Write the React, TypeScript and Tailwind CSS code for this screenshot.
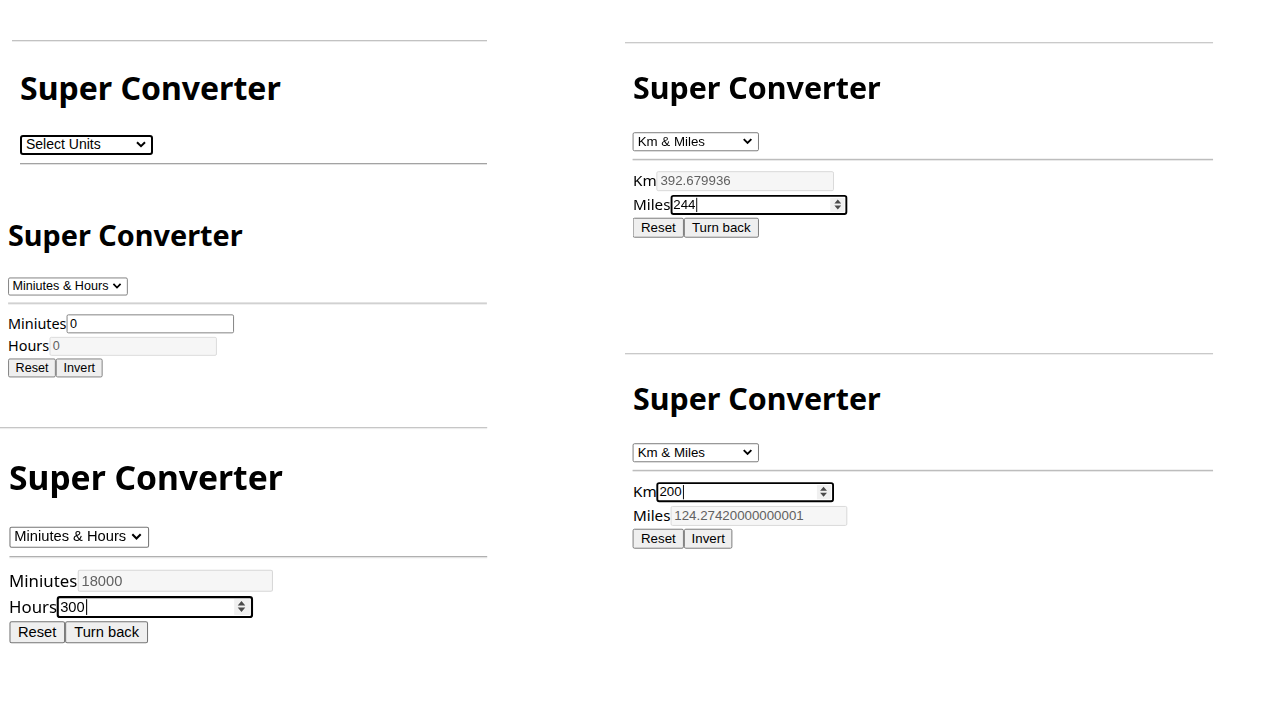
import React from "react";

type RowState = "normal" | "disabled" | "focused";
type Row = { label: string; value: string; state: RowState };

const ctl = "font-['Liberation_Sans',Arial,sans-serif] text-[14px] text-black";

function Spinner() {
  return (
    <div className="mr-[1px] flex h-[15px] w-[15px] items-center justify-center bg-[#f0f0f0]">
      <svg width="8" height="12" viewBox="0 0 8 12">
        <path d="M4 0.8 L7.6 5 H0.4 Z M4 11.2 L0.4 7 H7.6 Z" fill="#4a4a4a" />
      </svg>
    </div>
  );
}

function Field({ value, state }: { value: string; state: RowState }) {
  if (state === "focused") {
    return (
      <div className={`flex h-[21px] w-[186.5px] items-center justify-between rounded-[3px] border-2 border-black bg-white pl-[1px] ${ctl}`}>
        <div className="flex items-center">
          <span className="leading-[16px]">{value}</span>
          <span className="ml-[1px] h-[15px] w-px bg-black" />
        </div>
        <Spinner />
      </div>
    );
  }
  if (state === "disabled") {
    return (
      <div className={`flex h-[21px] w-[186.5px] items-center rounded-[2px] border border-[#d8d8d8] bg-[#f6f6f6] pl-[3px] ${ctl}`}>
        <span className="leading-[16px] text-[#616161]">{value}</span>
      </div>
    );
  }
  return (
    <div className={`flex h-[21px] w-[186.5px] items-center rounded-[2px] border border-[#767676] bg-white pl-[3px] ${ctl}`}>
      <span className="leading-[16px]">{value}</span>
    </div>
  );
}

function Btn({ label, w }: { label: string; w: string }) {
  return (
    <div className={`flex h-[21px] items-center justify-center rounded-[2px] border border-[#767676] bg-[#efefef] ${w} ${ctl}`}>
      <span className="leading-[16px]">{label}</span>
    </div>
  );
}

function Select({ label, focused }: { label: string; focused: boolean }) {
  return (
    <div
      className={`flex h-[20px] w-[133px] items-center justify-between bg-white ${ctl} ${
        focused ? "rounded-[3px] border-2 border-black pl-[4px] pr-[5px]" : "rounded-[2px] border border-[#767676] pl-[4px] pr-[6px]"
      }`}
    >
      <span className="-mt-[1px] leading-[16px] whitespace-nowrap">{label}</span>
      <svg width="10" height="7" viewBox="0 0 10 7" className="shrink-0">
        <polyline points="1,1.2 5,5.2 9,1.2" fill="none" stroke="#000" strokeWidth="2" />
      </svg>
    </div>
  );
}

type PanelProps = {
  wrap: string;
  hr1: string;
  hr2: string;
  pad: string;
  select: string;
  selectFocused?: boolean;
  rows?: Row[];
  buttons?: { label: string; w: string }[];
};

function Panel({ wrap, hr1, hr2, pad, select, selectFocused = false, rows = [], buttons = [] }: PanelProps) {
  return (
    <section className={`absolute origin-top-left ${wrap}`}>
      <div className={`h-[2px] border-t border-b ${hr1}`} />
      <div className={`flex flex-col ${pad}`}>
        <h1 className="mt-[25.6px] h-[40px] whitespace-nowrap font-['Noto_Sans',sans-serif] text-[32px] font-bold leading-[40px] text-black">
          Super Converter
        </h1>
        <div className="mt-[27.4px]">
          <Select label={select} focused={selectFocused} />
        </div>
        <div className={`mt-[8px] h-[2px] border-t border-b border-t-[#a3a3a3] border-b-[#e2e2e2] ${hr2}`} />
        {rows.length > 0 && (
          <div className="mt-[9px] flex flex-col">
            {rows.map((r) => (
              <div key={r.label} className="flex h-[25px] items-center">
                <span className="font-['Noto_Sans',sans-serif] text-[16px] leading-[21px] text-black">{r.label}</span>
                <Field value={r.value} state={r.state} />
              </div>
            ))}
            <div className="flex h-[25px] items-start pt-[1px]">
              {buttons.map((b) => (
                <Btn key={b.label} label={b.label} w={b.w} />
              ))}
            </div>
          </div>
        )}
      </div>
    </section>
  );
}

export default function App() {
  return (
    <div className="relative h-[720px] w-[1280px] overflow-hidden bg-white">
      <Panel
        wrap="left-[12px] top-[40px] scale-100"
        hr1="w-[475px] border-t-[#c2c2c2] border-b-[#ebebeb]"
        hr2="w-[467px]"
        pad="pl-[8px]"
        select="Select Units"
        selectFocused
      />
      <Panel
        wrap="left-0 top-[192.3px] scale-[0.9]"
        hr1="w-[10px] border-transparent"
        hr2="w-[532px]"
        pad="pl-[8.9px]"
        select="Miniutes & Hours"
        rows={[
          { label: "Miniutes", value: "0", state: "normal" },
          { label: "Hours", value: "0", state: "disabled" },
        ]}
        buttons={[
          { label: "Reset", w: "w-[53.5px]" },
          { label: "Invert", w: "w-[51.5px]" },
        ]}
      />
      <Panel
        wrap="left-0 top-[427px] scale-[1.05]"
        hr1="w-[464px] border-t-[#c6c6c6] border-b-[#ececec]"
        hr2="w-[455px]"
        pad="pl-[8.6px]"
        select="Miniutes & Hours"
        rows={[
          { label: "Miniutes", value: "18000", state: "disabled" },
          { label: "Hours", value: "300", state: "focused" },
        ]}
        buttons={[
          { label: "Reset", w: "w-[53.5px]" },
          { label: "Turn back", w: "w-[79px]" },
        ]}
      />
      <Panel
        wrap="left-[625px] top-[42px] scale-[0.95]"
        hr1="w-[619px] border-t-[#c6c6c6] border-b-[#ececec]"
        hr2="w-[610.5px]"
        pad="pl-[8.4px]"
        select="Km & Miles"
        rows={[
          { label: "Km", value: "392.679936", state: "disabled" },
          { label: "Miles", value: "244", state: "focused" },
        ]}
        buttons={[
          { label: "Reset", w: "w-[53.5px]" },
          { label: "Turn back", w: "w-[79px]" },
        ]}
      />
      <Panel
        wrap="left-[625px] top-[353px] scale-[0.95]"
        hr1="w-[619px] border-t-[#c6c6c6] border-b-[#ececec]"
        hr2="w-[610.5px]"
        pad="pl-[8.4px]"
        select="Km & Miles"
        rows={[
          { label: "Km", value: "200", state: "focused" },
          { label: "Miles", value: "124.27420000000001", state: "disabled" },
        ]}
        buttons={[
          { label: "Reset", w: "w-[53.5px]" },
          { label: "Invert", w: "w-[51.5px]" },
        ]}
      />
    </div>
  );
}
